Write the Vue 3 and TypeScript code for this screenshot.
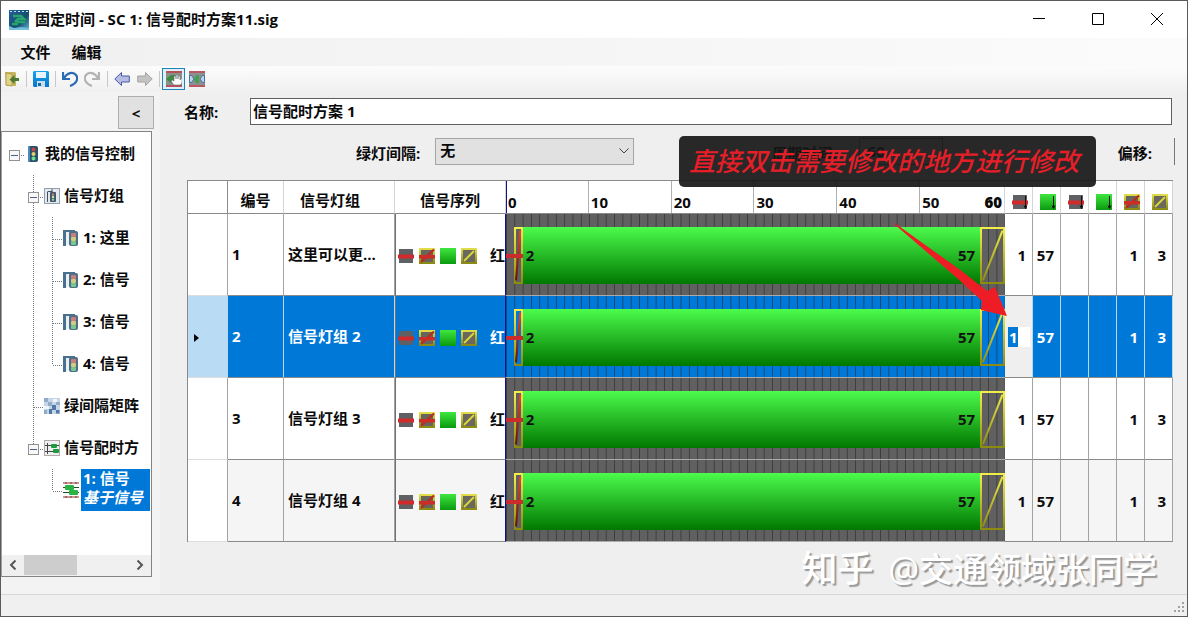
<script setup lang="ts">
import { ref } from 'vue'

type Guide = 'blank' | 'pipe' | 'tee' | 'elbow' | 'stub'

interface TreeRow {
  guides: Guide[]
  toggle?: boolean
  icon: string
  text: string
  detail?: string
}

interface SignalGroup {
  id: number
  name: string
  times: string[]
}

const tree: TreeRow[] = [
  { guides: ['stub'], toggle: true, icon: 'light', text: '我的信号控制' },
  { guides: ['blank', 'tee'], toggle: true, icon: 'groups', text: '信号灯组' },
  { guides: ['blank', 'pipe', 'tee'], icon: 'group', text: '1: 这里' },
  { guides: ['blank', 'pipe', 'tee'], icon: 'group', text: '2: 信号' },
  { guides: ['blank', 'pipe', 'tee'], icon: 'group', text: '3: 信号' },
  { guides: ['blank', 'pipe', 'elbow'], icon: 'group', text: '4: 信号' },
  { guides: ['blank', 'tee'], icon: 'matrix', text: '绿间隔矩阵' },
  { guides: ['blank', 'elbow'], toggle: true, icon: 'programs', text: '信号配时方' },
  { guides: ['blank', 'blank', 'elbow'], icon: 'program', text: '1: 信号', detail: '基于信号' },
]

const verticals: Record<Guide, string> = {
  blank: '',
  pipe: 'M9.5 0V42',
  tee: 'M9.5 0V42',
  elbow: 'M9.5 0V22',
  stub: '',
}

const times = ['1', '57', '', '', '1', '3']
const groups: SignalGroup[] = [
  { id: 1, name: '这里可以更...', times },
  { id: 2, name: '信号灯组 2', times },
  { id: 3, name: '信号灯组 3', times },
  { id: 4, name: '信号灯组 4', times },
]
const selected = ref(2)
const programName = ref('信号配时方案 1')
const cycle = ref(60)
const offset = ref(0)
const redEnd = ref('1')

const sequence = ['red', 'redamber', 'green', 'amber']
const timeColumns = [
  { icon: 'red', arrow: true, label: '红灯结束 1' },
  { icon: 'green', arrow: true, label: '绿灯结束 1' },
  { icon: 'red', arrow: true, label: '红灯结束 2' },
  { icon: 'green', arrow: true, label: '绿灯结束 2' },
  { icon: 'redamber', arrow: false, label: '红黄' },
  { icon: 'amber', arrow: false, label: '黄' },
]
const scale = [0, 10, 20, 30, 40, 50]
const phases = [
  { kind: 'red', seconds: 1 },
  { kind: 'redamber', seconds: 1 },
  { kind: 'green', seconds: 55 },
  { kind: 'amber', seconds: 3 },
]
</script>

<template>
  <div class="window">
    <svg class="sprite" width="0" height="0" aria-hidden="true">
      <defs>
        <linearGradient id="gGreen" x1="0" y1="0" x2="0" y2="1"><stop offset="0" stop-color="#3fe63f" /><stop offset="1" stop-color="#0a9a0f" /></linearGradient>
        <linearGradient id="gAmber" x1="0" y1="0" x2="0" y2="1"><stop offset="0" stop-color="#e0dd48" /><stop offset="1" stop-color="#8b8b14" /></linearGradient>
        <linearGradient id="gDiag" gradientUnits="userSpaceOnUse" x1="0" y1="0" x2="0" y2="100"><stop offset="0" stop-color="#f0ee4a" /><stop offset="1" stop-color="#8b8b10" /></linearGradient>
        <linearGradient id="gRedDiag" gradientUnits="userSpaceOnUse" x1="0" y1="0" x2="0" y2="100"><stop offset="0" stop-color="#f04a2c" /><stop offset="1" stop-color="#5c1008" /></linearGradient>
        <linearGradient id="gApp" x1="0" y1="0" x2="1" y2="1"><stop offset="0" stop-color="#275c9c" /><stop offset=".6" stop-color="#14506e" /><stop offset="1" stop-color="#63b6cf" /></linearGradient>
        <linearGradient id="gSave" x1="0" y1="0" x2="0" y2="1"><stop offset="0" stop-color="#16a5ef" /><stop offset="1" stop-color="#0875c9" /></linearGradient>
      </defs>
      <symbol id="red" viewBox="0 0 16 16">
        <rect x="1" y="1" width="14" height="14" fill="#5f6064" /><path d="M0 6.500h16v4H0z" fill="#d02a2a" />
      </symbol>
      <symbol id="redamber" viewBox="0 0 16 16">
        <rect x="1" y="1" width="14" height="14" fill="#68655c" stroke="url(#gAmber)" stroke-width="2" />
        <path d="M2 14L15 1.500" stroke="#b92b20" stroke-width="2.200" /><path d="M0 7h16v3.500H0z" fill="#cc2e26" />
      </symbol>
      <symbol id="green" viewBox="0 0 16 16"><rect width="16" height="16" fill="url(#gGreen)" /></symbol>
      <symbol id="amber" viewBox="0 0 16 16">
        <rect x="1" y="1" width="14" height="14" fill="#6a685e" stroke="url(#gAmber)" stroke-width="2" /><path d="M3 13L13 3" stroke="#d9d63a" stroke-width="2" />
      </symbol>
      <symbol id="light" viewBox="0 0 16 16">
        <rect x="3" y="0" width="10" height="16" rx="2" fill="#2b506b" /><rect x="3" y="0" width="2" height="16" rx="1" fill="#4b8bbb" />
        <circle cx="8.500" cy="3.500" r="2" fill="#c8443c" /><circle cx="8.500" cy="8" r="2" fill="#e6cf6a" /><circle cx="8.500" cy="12.500" r="2" fill="#6fe08a" />
      </symbol>
      <symbol id="groups" viewBox="0 0 16 16">
        <rect x=".5" y=".5" width="15" height="15" fill="#e2e8ee" stroke="#93a0b1" /><path d="M3.500 4v10M3.500 3.500h5M8 1v3" stroke="#47515d" fill="none" />
        <rect x="6" y="4" width="6" height="10" rx="1" fill="#415769" /><circle cx="9" cy="6.500" r="1.200" fill="#c47b73" /><circle cx="9" cy="9" r="1.200" fill="#d7dc94" /><circle cx="9" cy="11.700" r="1.200" fill="#7ed18b" />
      </symbol>
      <symbol id="group" viewBox="0 0 16 16">
        <path d="M0 0h12v2H3v14H0z" fill="#49718e" /><path d="M3 2h3v13H3z" fill="#e9f0f5" />
        <rect x="6" y="1" width="9" height="15" rx="2" fill="#4f6f88" /><rect x="8" y="3" width="5" height="4" rx="1" fill="#c8807d" /><rect x="8" y="7" width="5" height="4" rx="1" fill="#d2cc82" /><rect x="8" y="11" width="5" height="4" rx="1" fill="#79c98f" />
      </symbol>
      <symbol id="matrix" viewBox="0 0 16 16">
        <rect width="16" height="16" fill="#c3d6ea" /><path d="M0 0h4v4H0zM4 4h4v4H4zM12 4h4v3h-4zM12 12h4v4h-4zM0 12h3v4H0z" fill="#91abc9" /><path d="M8 7h4v5H8zM5 11h3v5H5zM12 12h3v3h-3z" fill="#5378a3" /><path d="M0 8h5v3H0zM9 1h4v3H9z" fill="#eff5fb" />
      </symbol>
      <symbol id="programs" viewBox="0 0 16 16">
        <rect x=".5" y=".5" width="15" height="15" fill="#edf0ee" stroke="#b3a6a6" /><path d="M3.500 3v11M1 5.500h14M1 11.500h14" stroke="#444" />
        <rect x="7" y="4" width="6" height="4" rx="1" fill="#1c9a3d" /><rect x="9" y="9" width="6" height="4" rx="1" fill="#1c9a3d" />
      </symbol>
      <symbol id="program" viewBox="0 0 16 16">
        <path d="M0 1h16M0 15h16M3 0v2M8 0v2M13 0v2M3 14v2M8 14v2M13 14v2" stroke="#8c3030" />
        <path d="M0 5.500h16M0 10.500h16" stroke="#244b2c" /><rect x="2" y="3" width="9" height="5" rx="1" fill="#27b443" /><rect x="6" y="8" width="9" height="5" rx="1" fill="#27b443" />
      </symbol>
      <symbol id="logo" viewBox="0 0 20 20">
        <rect width="20" height="20" fill="url(#gApp)" /><path d="M1 1.500h18" stroke="#b9e2f2" stroke-dasharray="2 2" /><path d="M4 6h8l3 3H9l-3 3M8 12h8M3 14h6" stroke="#28a56c" stroke-width="2.500" fill="none" /><path d="M0 16l5 2 7-1 8 1v2H0z" fill="#75bddd" />
      </symbol>
      <symbol id="exit" viewBox="0 0 16 16">
        <path d="M1 1h10l1 1v13H2z" fill="#c5b55e" /><path d="M2 2l6 1v12l-6-1z" fill="#e1d489" stroke="#b1a050" /><path d="M15 8.500H9" stroke="#4b7a32" stroke-width="3" /><path d="M10.500 4v9L5.500 8.500z" fill="#4b7a32" />
      </symbol>
      <symbol id="save" viewBox="0 0 16 16">
        <path d="M1 0h14l1 1v15H1l-1-1V1z" fill="url(#gSave)" /><path d="M3 1h10v6H3z" fill="#e8f5fd" /><path d="M4 10h8v6H4z" fill="#cbdde9" /><path d="M5 12h3v3H5z" fill="#1268a9" />
      </symbol>
      <symbol id="undo" viewBox="0 0 16 16">
        <path d="M2 7C5 2 11 0 14 4c3 4 0 9-6 11" fill="none" stroke="currentColor" stroke-width="2.200" /><path d="M1 1v7h7" fill="none" stroke="currentColor" stroke-width="2.200" />
      </symbol>
      <symbol id="back" viewBox="0 0 16 16"><path d="M.8 8L7.500 1.500V5h7.800v6H7.500v3.500z" fill="currentColor" stroke="#4a58a5" /></symbol>
      <symbol id="forward" viewBox="0 0 16 16"><path d="M15.200 8L8.500 1.500V5H.7v6h7.800v3.500z" fill="#c3c3c3" stroke="#a4a4a4" /></symbol>
      <symbol id="drag" viewBox="0 0 16 16">
        <rect width="16" height="16" fill="#8a908a" /><path d="M0 1h16M0 15h16" stroke="#b65059" stroke-width="2" /><path d="M0 8l5-4h4v8H5z" fill="#3e8a42" />
        <path d="M8 14L5 10l1-1 2 1V5h2v3-4h2v4-3h2v4l1-2 1 1v4l-2 2z" fill="#fff" stroke="#68716e" stroke-width=".6" />
      </symbol>
      <symbol id="stretch" viewBox="0 0 16 16">
        <rect width="16" height="16" fill="#8b9093" /><path d="M0 1h16M0 15h16" stroke="#b95a62" stroke-width="2" /><path d="M7 4h3v8H7L5 8z" fill="#43a14b" />
        <path d="M.5 4.500h2L5 8l-2.500 3.500h-2zM15.500 4.500h-2L11 8l2.500 3.500h2z" fill="#b9d4ef" stroke="#3b608d" stroke-width=".8" />
      </symbol>
    </svg>

    <header class="titlebar">
      <svg class="app-icon"><use href="#logo" /></svg>
      <h1>固定时间 - SC 1: 信号配时方案11.sig</h1>
      <div class="window-buttons">
        <button type="button" aria-label="最小化"><svg viewBox="0 0 12 12"><path d="M0 5.500h12" /></svg></button>
        <button type="button" aria-label="最大化"><svg viewBox="0 0 12 12"><path d="M.5 .5h11v11H.5z" /></svg></button>
        <button type="button" aria-label="关闭"><svg viewBox="0 0 12 12"><path d="M0 0l12 12M12 0L0 12" /></svg></button>
      </div>
    </header>

    <nav class="menu">
      <button type="button">文件</button>
      <button type="button">编辑</button>
    </nav>

    <div class="toolbar">
      <button type="button" aria-label="退出"><svg><use href="#exit" /></svg></button>
      <i class="sep"></i>
      <button type="button" aria-label="保存"><svg><use href="#save" /></svg></button>
      <i class="sep"></i>
      <button type="button" class="undo" aria-label="撤销"><svg><use href="#undo" /></svg></button>
      <button type="button" class="redo" aria-label="重做"><svg><use href="#undo" /></svg></button>
      <i class="sep"></i>
      <button type="button" class="back" aria-label="后退"><svg><use href="#back" /></svg></button>
      <button type="button" aria-label="前进"><svg><use href="#forward" /></svg></button>
      <i class="sep"></i>
      <button type="button" class="active" aria-label="移动"><svg><use href="#drag" /></svg></button>
      <button type="button" aria-label="拉伸"><svg><use href="#stretch" /></svg></button>
    </div>

    <div class="body">
      <aside class="sidebar">
        <button type="button" class="collapse">&lt;</button>
        <div class="tree">
          <ul>
            <li v-for="(row, i) in tree" :key="i">
              <span v-for="(g, k) in row.guides" :key="k" class="guide">
                <svg viewBox="0 0 19 42">
                  <path :d="verticals[g] + (k === row.guides.length - 1 ? 'M10 22.5H19' : '')" />
                </svg>
                <button v-if="row.toggle && k === row.guides.length - 1" type="button" class="toggle" aria-expanded="true" :aria-label="row.text"></button>
              </span>
              <svg class="node-icon"><use :href="'#' + row.icon" /></svg>
              <span class="node" :class="{ chosen: row.detail }">{{ row.text }}<em v-if="row.detail">{{ row.detail }}</em></span>
            </li>
          </ul>
          <div class="scrollbar">
            <button type="button" aria-label="向左"><svg viewBox="0 0 8 10"><path d="M6.500 .5L2 5l4.500 4.500" /></svg></button>
            <span class="track"><span class="thumb"></span></span>
            <button type="button" aria-label="向右"><svg viewBox="0 0 8 10"><path d="M1.500 .5L6 5 1.500 9.500" /></svg></button>
          </div>
        </div>
      </aside>

      <main>
        <div class="name-row">
          <label for="name">名称:</label>
          <input id="name" v-model="programName" type="text">
        </div>
        <div class="options">
          <label for="intergreen">绿灯间隔:</label>
          <span class="select">
            <select id="intergreen"><option>无</option></select>
            <svg viewBox="0 0 10 6"><path d="M.5 .5L5 5l4.500-4.500" /></svg>
          </span>
          <label class="cycle-label" for="cycle">周期时间:</label>
          <input id="cycle" v-model="cycle" type="number">
          <label class="offset-label" for="offset">偏移:</label>
          <span class="clip"><input id="offset" v-model="offset" type="number"></span>
        </div>

        <table>
          <colgroup>
            <col class="c-mark"><col class="c-id"><col class="c-name"><col class="c-seq"><col>
            <col v-for="c in timeColumns" :key="c.label" class="c-time">
          </colgroup>
          <thead>
            <tr>
              <th></th>
              <th>编号</th>
              <th>信号灯组</th>
              <th>信号序列</th>
              <th class="scale-cell">
                <div class="scale">
                  <span v-for="s in scale" :key="s">{{ s }}</span>
                  <b>60</b>
                </div>
              </th>
              <th v-for="c in timeColumns" :key="c.label" class="icon-cell" :aria-label="c.label">
                <svg class="head-icon" viewBox="0 0 16 16">
                  <use :href="'#' + c.icon" width="16" height="16" />
                  <path v-if="c.arrow" d="M13.500 2v12M12 11.500l1.500 3 1.500-3" fill="none" stroke="#111" />
                </svg>
              </th>
            </tr>
          </thead>
          <tbody>
            <tr v-for="g in groups" :key="g.id" :class="{ selected: g.id === selected, alt: g.id % 2 === 0 }" @click="selected = g.id">
              <td class="mark"><svg v-if="g.id === selected" viewBox="0 0 5 8"><path d="M0 0l5 4-5 4z" /></svg></td>
              <td>{{ g.id }}</td>
              <td>{{ g.name }}</td>
              <td class="seq">
                <div>
                  <svg v-for="s in sequence" :key="s"><use :href="'#' + s" /></svg>
                  <span>红</span>
                </div>
              </td>
              <td class="time">
                <div class="lane">
                  <div v-for="p in phases" :key="p.kind" :class="['phase', p.kind]" :style="{ width: (p.seconds / cycle) * 100 + '%' }">
                    <svg v-if="p.kind === 'redamber' || p.kind === 'amber'" viewBox="0 0 100 100" preserveAspectRatio="none">
                      <path v-if="p.kind === 'redamber'" d="M0 97L100 3" stroke="url(#gRedDiag)" />
                      <path v-else d="M4 97L98 3" stroke="url(#gDiag)" />
                    </svg>
                    <template v-if="p.kind === 'green'"><span>2</span><span>57</span></template>
                  </div>
                </div>
              </td>
              <td v-for="(t, k) in g.times" :key="k" class="num" :class="{ editing: g.id === selected && k === 0 }">
                <input v-if="g.id === selected && k === 0" v-model="redEnd" type="text" aria-label="红灯结束">
                <template v-else>{{ t }}</template>
              </td>
            </tr>
          </tbody>
        </table>

        <p class="callout">直接双击需要修改的地方进行修改</p>
        <svg class="pointer" viewBox="0 0 116 96"><path d="M0 0L3 1 70 49 94 68 102 64 114 93 88 87 89 78 64 55z" /></svg>
        <p class="watermark"><strong>知乎</strong><span>@交通领域张同学</span></p>
      </main>
    </div>

    <footer class="status">
      <svg viewBox="0 0 12 12"><path d="M9 0h2v2H9zM9 4h2v2H9zM5 4h2v2H5zM9 8h2v2H9zM5 8h2v2H5zM1 8h2v2H1z" /></svg>
    </footer>
  </div>
</template>

<style>
body {
  background: #efefef;
}
</style>

<style scoped>
* {
  box-sizing: border-box;
}
.window {
  display: flex;
  flex-direction: column;
  min-height: 100vh;
  border: 1px solid #5a5a5c;
  background: #efefef;
  color: #0a0a0a;
  font: 700 15px/20px "Open Sans", "Noto Sans CJK SC", sans-serif;
  overflow: hidden;
}
.sprite {
  position: absolute;
}
button,
input,
select {
  font: inherit;
  color: inherit;
  margin: 0;
  padding: 0;
  border: 0;
  border-radius: 0;
  background: none;
  outline: 0;
}
button {
  display: flex;
  align-items: center;
  justify-content: center;
}
.titlebar {
  display: flex;
  align-items: center;
  height: 37px;
  padding: 0 1px 0 8px;
  background: #fff;
}
.app-icon {
  width: 20px;
  height: 20px;
}
h1 {
  flex: 1;
  margin: 0 0 0 6px;
  padding-bottom: 2px;
  font-size: 15px;
  line-height: 20px;
}
.window-buttons {
  display: flex;
}
.window-buttons button {
  width: 59px;
  height: 37px;
  padding-bottom: 2px;
}
.window-buttons svg {
  width: 12px;
  height: 12px;
  fill: none;
  stroke: #000;
}
.menu {
  display: flex;
  height: 28px;
  padding-left: 13px;
  background: linear-gradient(90deg, #f0f0f0, #fbfbfb);
}
.menu button {
  width: 43px;
  margin-right: 8px;
}
.toolbar {
  display: flex;
  align-items: center;
  height: 26px;
  background: linear-gradient(#fcfcfc, #f0f0f0);
}
.toolbar button {
  width: 23px;
  height: 22px;
  border: 1px solid transparent;
}
.toolbar button:first-child {
  width: 22px;
}
.toolbar button.active {
  border-color: #1f83b5;
  background: #dff0f8;
}
.toolbar svg {
  width: 16px;
  height: 16px;
}
.sep {
  width: 1px;
  height: 16px;
  margin: 0 2px 0 3px;
  background: #c8c8c8;
}
.undo {
  color: #2d6cb3;
}
.redo {
  color: #b4b4b4;
  transform: scaleX(-1);
}
.back {
  color: #b5bce6;
}
.body {
  display: flex;
  flex: 1;
}
.sidebar {
  display: flex;
  flex-direction: column;
  flex: none;
  width: 159px;
  padding: 4px 8px 17px 0;
  background: #f3f3f3;
}
.collapse {
  align-self: flex-end;
  width: 36px;
  height: 33px;
  margin: 0 -2px 2px 0;
  border: 1px solid #adadad;
  background: #e1e1e1;
}
.tree {
  display: flex;
  flex-direction: column;
  flex: 1;
  border: 1px solid #828287;
  border-left-color: #a0a0a0;
  background: #fff;
}
.tree ul {
  flex: 1;
  margin: 0;
  padding: 1px 0 0 3px;
  list-style: none;
}
.tree li {
  display: flex;
  align-items: center;
  height: 42px;
}
.guide {
  display: flex;
  align-items: center;
  justify-content: center;
  position: relative;
  width: 19px;
  height: 42px;
}
.guide svg {
  width: 19px;
  height: 42px;
  fill: none;
  stroke: #777;
  stroke-dasharray: 1 1;
}
.toggle {
  position: absolute;
  left: 4px;
  top: 17px;
  width: 11px;
  height: 11px;
  border: 1px solid #929292;
  background: linear-gradient(#4b5f8f, #4b5f8f) center / 7px 1px no-repeat, #f8f8f8;
}
.node-icon {
  flex: none;
  width: 16px;
  height: 16px;
  margin: 0 1px;
}
.node {
  padding: 0 0 2px 3px;
  white-space: nowrap;
}
.node em {
  display: block;
}
.node.chosen {
  flex: 1;
  height: 42px;
  margin: 0 1px;
  padding-left: 2px;
  background: #0078d7;
  color: #fff;
  line-height: 19px;
}
.scrollbar {
  display: flex;
  height: 21px;
  padding-bottom: 1px;
  background: #f0f0f0;
}
.scrollbar button {
  width: 22px;
}
.scrollbar svg {
  width: 8px;
  height: 10px;
  fill: none;
  stroke: #555;
  stroke-width: 2;
}
.track {
  flex: 1;
}
.thumb {
  display: block;
  width: 50%;
  height: 100%;
  background: #cdcdcd;
}
main {
  position: relative;
  flex: 1;
  min-width: 0;
  padding: 6px 14px 0 27px;
}
.name-row {
  display: grid;
  grid-template-columns: 66px 1fr;
  align-items: center;
  margin: 0 1px 0 -3px;
}
.name-row input {
  width: 100%;
  height: 27px;
  padding: 0 2px 2px;
  border: 1px solid #5f5f5f;
  background: #fff;
}
.options {
  display: flex;
  align-items: center;
  height: 30px;
  margin: 11px -2px 14px 169px;
}
.options label {
  padding-top: 3px;
}
.select {
  display: flex;
  position: relative;
  width: 199px;
  margin-left: 15px;
}
.select select {
  appearance: none;
  width: 100%;
  height: 27px;
  padding: 0 0 2px 4px;
  border: 1px solid #a6a6a6;
  background: #e1e1e1;
}
.select svg {
  position: absolute;
  right: 5px;
  top: 10px;
  width: 10px;
  height: 6px;
  fill: none;
  stroke: #444;
}
.cycle-label {
  margin-left: 138px;
}
#cycle {
  width: 84px;
  height: 27px;
  margin-left: 22px;
  padding-left: 8px;
  border: 1px solid #777;
}
.offset-label {
  margin-left: auto;
}
.clip {
  width: 1px;
  height: 27px;
  margin-left: 22px;
  overflow: hidden;
}
.clip input {
  width: 80px;
  height: 27px;
  border: 1px solid #777;
}
table {
  width: 100%;
  table-layout: fixed;
  border-spacing: 0;
  border-top: 1px solid #8a8a8a;
  border-left: 1px solid #8a8a8a;
  background: #fff;
}
.c-mark {
  width: 40px;
}
.c-id {
  width: 56px;
}
.c-name {
  width: 111px;
}
.c-seq {
  width: 111px;
}
.c-time {
  width: 28px;
}
th {
  height: 33px;
  padding: 6px 0 0;
  border-right: 1px solid #d5d5d5;
  border-bottom: 1px solid #8a8a8a;
}
th:first-child {
  border-right-color: #8a8a8a;
}
th:nth-child(3) {
  padding-right: 18px;
}
th.scale-cell {
  padding: 0;
}
th.icon-cell {
  padding: 10px 0 0 3px;
}
.scale {
  display: flex;
  height: 32px;
}
.scale span {
  flex: 1;
  padding: 11px 0 0 2px;
  border-left: 1px solid #b0b0b0;
  text-align: left;
}
.scale span:first-child {
  padding-left: 1px;
  border-color: #101090;
}
.scale b {
  width: 0;
  padding-top: 11px;
  margin-right: 2px;
  direction: rtl;
}
.head-icon {
  display: block;
  width: 16px;
  height: 16px;
  margin: 0 auto;
}
td {
  height: 82px;
  padding: 0 4px 2px;
  border-right: 1px solid #a3a3a3;
  border-bottom: 1px solid #8a8a8a;
  white-space: nowrap;
}
.alt td {
  background: #f5f5f5;
}
.selected td {
  background: #0078d7;
  border-right-color: #b8d8f0;
  color: #fff;
}
td.mark {
  padding: 2px 0 0 6px;
  border-bottom-color: #ddd;
  background: #fff;
}
.selected td.mark {
  background: #b9dbf3;
}
.mark svg {
  display: block;
  width: 5px;
  height: 8px;
}
td.seq {
  padding: 2px 0 0 2px;
  border-left: 1px solid #707070;
  border-right-color: #101090;
}
.seq div {
  display: flex;
  align-items: center;
  gap: 5px;
  overflow: hidden;
}
.seq svg {
  flex: none;
  width: 16px;
  height: 16px;
}
.seq span {
  margin-left: 8px;
  padding-bottom: 2px;
}
td.time,
.alt td.time {
  padding: 2px 0 0;
  border-right: 0;
  border-bottom-color: #aaa;
  background-color: #606060;
  background-image: linear-gradient(90deg, #3c3c3c 1px, transparent 1px);
  background-size: calc(100% / 60) 100%;
  color: #111;
}
.selected td.time {
  background-color: #0078d7;
  background-image: linear-gradient(90deg, #174874 1px, transparent 1px);
}
.lane {
  display: flex;
  height: 57px;
}
.phase {
  flex: none;
  position: relative;
}
.phase.green {
  display: flex;
  align-items: center;
  justify-content: space-between;
  padding: 0 5px 2px 3px;
  background: linear-gradient(#4cfb4c, #007800);
}
.phase.red::before,
.phase.redamber::before {
  content: "";
  position: absolute;
  left: 0;
  right: 0;
  top: 27px;
  height: 4px;
  background: #cc2b2b;
}
.phase.redamber,
.phase.amber {
  border: 2px solid;
  border-image: linear-gradient(#f2ef4a, #8b8b10) 1;
}
.phase.redamber::before {
  left: -2px;
  right: -2px;
  top: 25px;
}
.phase svg {
  display: block;
  width: 100%;
  height: 100%;
  overflow: visible;
}
.phase path {
  fill: none;
  stroke-width: 2;
  vector-effect: non-scaling-stroke;
}
td.num {
  padding: 0 6px 0 0;
  text-align: right;
}
.selected td.editing {
  padding: 0 2px 0 3px;
  background: #efefef;
}
.editing input {
  display: block;
  width: 100%;
  height: 20px;
  padding-left: 1px;
  background: linear-gradient(90deg, #0078d7 10px, #fff 10px);
  color: #fff;
}
.callout {
  position: absolute;
  top: 44px;
  right: 91px;
  margin: 0;
  padding: 6px 10px 7px;
  width: 417px;
  height: 51px;
  border-radius: 5px;
  background: rgba(23, 23, 23, 0.92);
  color: #e61e28;
  font-size: 26px;
  line-height: 38px;
  font-style: italic;
  font-weight: 500;
  white-space: nowrap;
}
.pointer {
  position: absolute;
  top: 131px;
  right: 178px;
  width: 116px;
  height: 96px;
  fill: #ee1c25;
}
.watermark {
  display: flex;
  align-items: center;
  gap: 15px;
  position: absolute;
  right: 30px;
  bottom: 3px;
  margin: 0;
  color: #fff;
  font-size: 34px;
  line-height: 44px;
  font-weight: 500;
  text-shadow: 2px 2px 1px #999;
  white-space: nowrap;
}
.watermark strong {
  font-size: 36px;
  font-weight: 500;
}
.status {
  display: flex;
  align-items: flex-end;
  justify-content: flex-end;
  height: 22px;
  border-top: 1px solid #d7d7d7;
  background: #f0f0f0;
}
.status svg {
  width: 12px;
  height: 12px;
  margin: 0 2px 2px 0;
  fill: #a0a0a0;
}
</style>
